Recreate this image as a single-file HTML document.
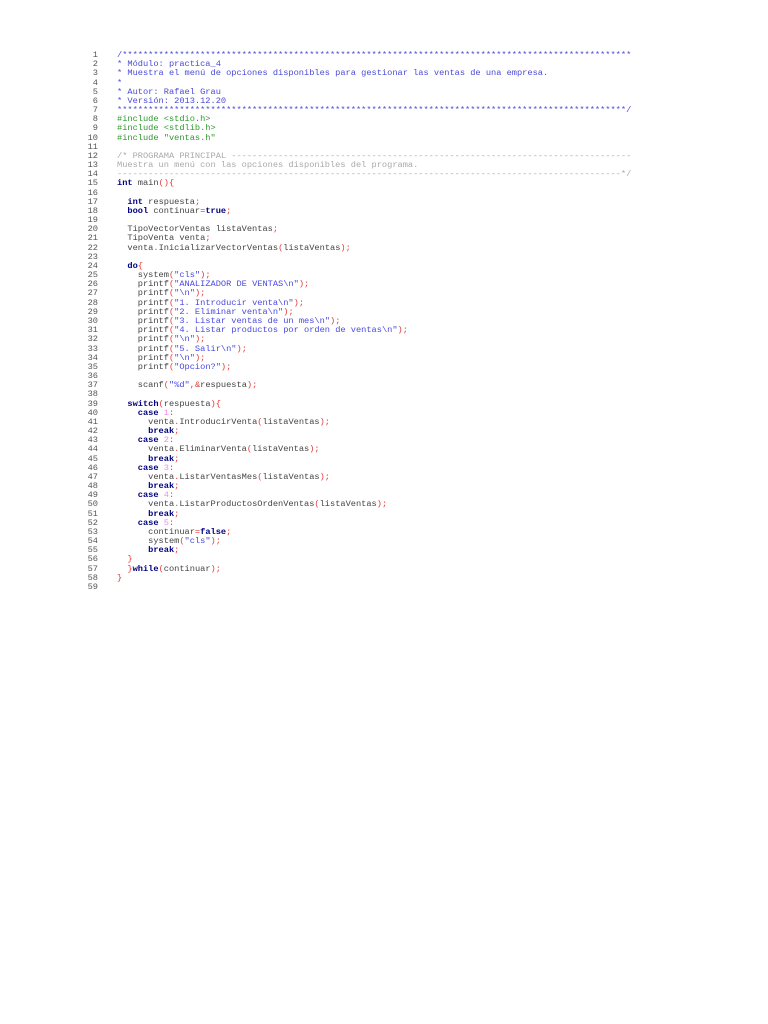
<!DOCTYPE html>
<html><head><meta charset="utf-8"><style>
html,body{margin:0;padding:0;background:#fff;width:768px;height:1024px;overflow:hidden}
pre{position:absolute;margin:0;font-family:"Liberation Mono",monospace;font-size:8.67px;line-height:9.17px;white-space:pre}
#num{left:60px;width:38px;text-align:right;top:51px;color:#555}
#code{left:117px;top:51px;color:#444}
.c{color:#4a4ad8}.g{color:#2e9a2e}.gr{color:#aaa}.k{color:#000080;font-weight:bold}.p{color:#e23a3a}.s{color:#4a4ae0}.n{color:#f08af0}
</style></head><body>
<pre id="num">1
2
3
4
5
6
7
8
9
10
11
12
13
14
15
16
17
18
19
20
21
22
23
24
25
26
27
28
29
30
31
32
33
34
35
36
37
38
39
40
41
42
43
44
45
46
47
48
49
50
51
52
53
54
55
56
57
58
59</pre>
<pre id="code"><span class="c">/**************************************************************************************************
* Módulo: practica_4
* Muestra el menú de opciones disponibles para gestionar las ventas de una empresa.
*
* Autor: Rafael Grau
* Versión: 2013.12.20
**************************************************************************************************/</span>
<span class="g">#include &lt;stdio.h&gt;
#include &lt;stdlib.h&gt;
#include "ventas.h"</span>

<span class="gr">/* PROGRAMA PRINCIPAL -----------------------------------------------------------------------------
Muestra un menú con las opciones disponibles del programa.
-------------------------------------------------------------------------------------------------*/</span>
<span class="k">int</span> main<span class="p">(){</span>

  <span class="k">int</span> respuesta<span class="p">;</span>
  <span class="k">bool</span> continuar<span class="p">=</span><span class="k">true</span><span class="p">;</span>

  TipoVectorVentas listaVentas<span class="p">;</span>
  TipoVenta venta<span class="p">;</span>
  venta<span class="p">.</span>InicializarVectorVentas<span class="p">(</span>listaVentas<span class="p">);</span>

  <span class="k">do</span><span class="p">{</span>
    system<span class="p">(</span><span class="s">"cls"</span><span class="p">);</span>
    printf<span class="p">(</span><span class="s">"ANALIZADOR DE VENTAS\n"</span><span class="p">);</span>
    printf<span class="p">(</span><span class="s">"\n"</span><span class="p">);</span>
    printf<span class="p">(</span><span class="s">"1. Introducir venta\n"</span><span class="p">);</span>
    printf<span class="p">(</span><span class="s">"2. Eliminar venta\n"</span><span class="p">);</span>
    printf<span class="p">(</span><span class="s">"3. Listar ventas de un mes\n"</span><span class="p">);</span>
    printf<span class="p">(</span><span class="s">"4. Listar productos por orden de ventas\n"</span><span class="p">);</span>
    printf<span class="p">(</span><span class="s">"\n"</span><span class="p">);</span>
    printf<span class="p">(</span><span class="s">"5. Salir\n"</span><span class="p">);</span>
    printf<span class="p">(</span><span class="s">"\n"</span><span class="p">);</span>
    printf<span class="p">(</span><span class="s">"Opcion?"</span><span class="p">);</span>

    scanf<span class="p">(</span><span class="s">"%d"</span><span class="p">,&amp;</span>respuesta<span class="p">);</span>

  <span class="k">switch</span><span class="p">(</span>respuesta<span class="p">){</span>
    <span class="k">case</span> <span class="n">1</span><span class="p">:</span>
      venta<span class="p">.</span>IntroducirVenta<span class="p">(</span>listaVentas<span class="p">);</span>
      <span class="k">break</span><span class="p">;</span>
    <span class="k">case</span> <span class="n">2</span><span class="p">:</span>
      venta<span class="p">.</span>EliminarVenta<span class="p">(</span>listaVentas<span class="p">);</span>
      <span class="k">break</span><span class="p">;</span>
    <span class="k">case</span> <span class="n">3</span><span class="p">:</span>
      venta<span class="p">.</span>ListarVentasMes<span class="p">(</span>listaVentas<span class="p">);</span>
      <span class="k">break</span><span class="p">;</span>
    <span class="k">case</span> <span class="n">4</span><span class="p">:</span>
      venta<span class="p">.</span>ListarProductosOrdenVentas<span class="p">(</span>listaVentas<span class="p">);</span>
      <span class="k">break</span><span class="p">;</span>
    <span class="k">case</span> <span class="n">5</span><span class="p">:</span>
      continuar<span class="p">=</span><span class="k">false</span><span class="p">;</span>
      system<span class="p">(</span><span class="s">"cls"</span><span class="p">);</span>
      <span class="k">break</span><span class="p">;</span>
  <span class="p">}</span>
  <span class="p">}</span><span class="k">while</span><span class="p">(</span>continuar<span class="p">);</span>
<span class="p">}</span>
</pre>
</body></html>
